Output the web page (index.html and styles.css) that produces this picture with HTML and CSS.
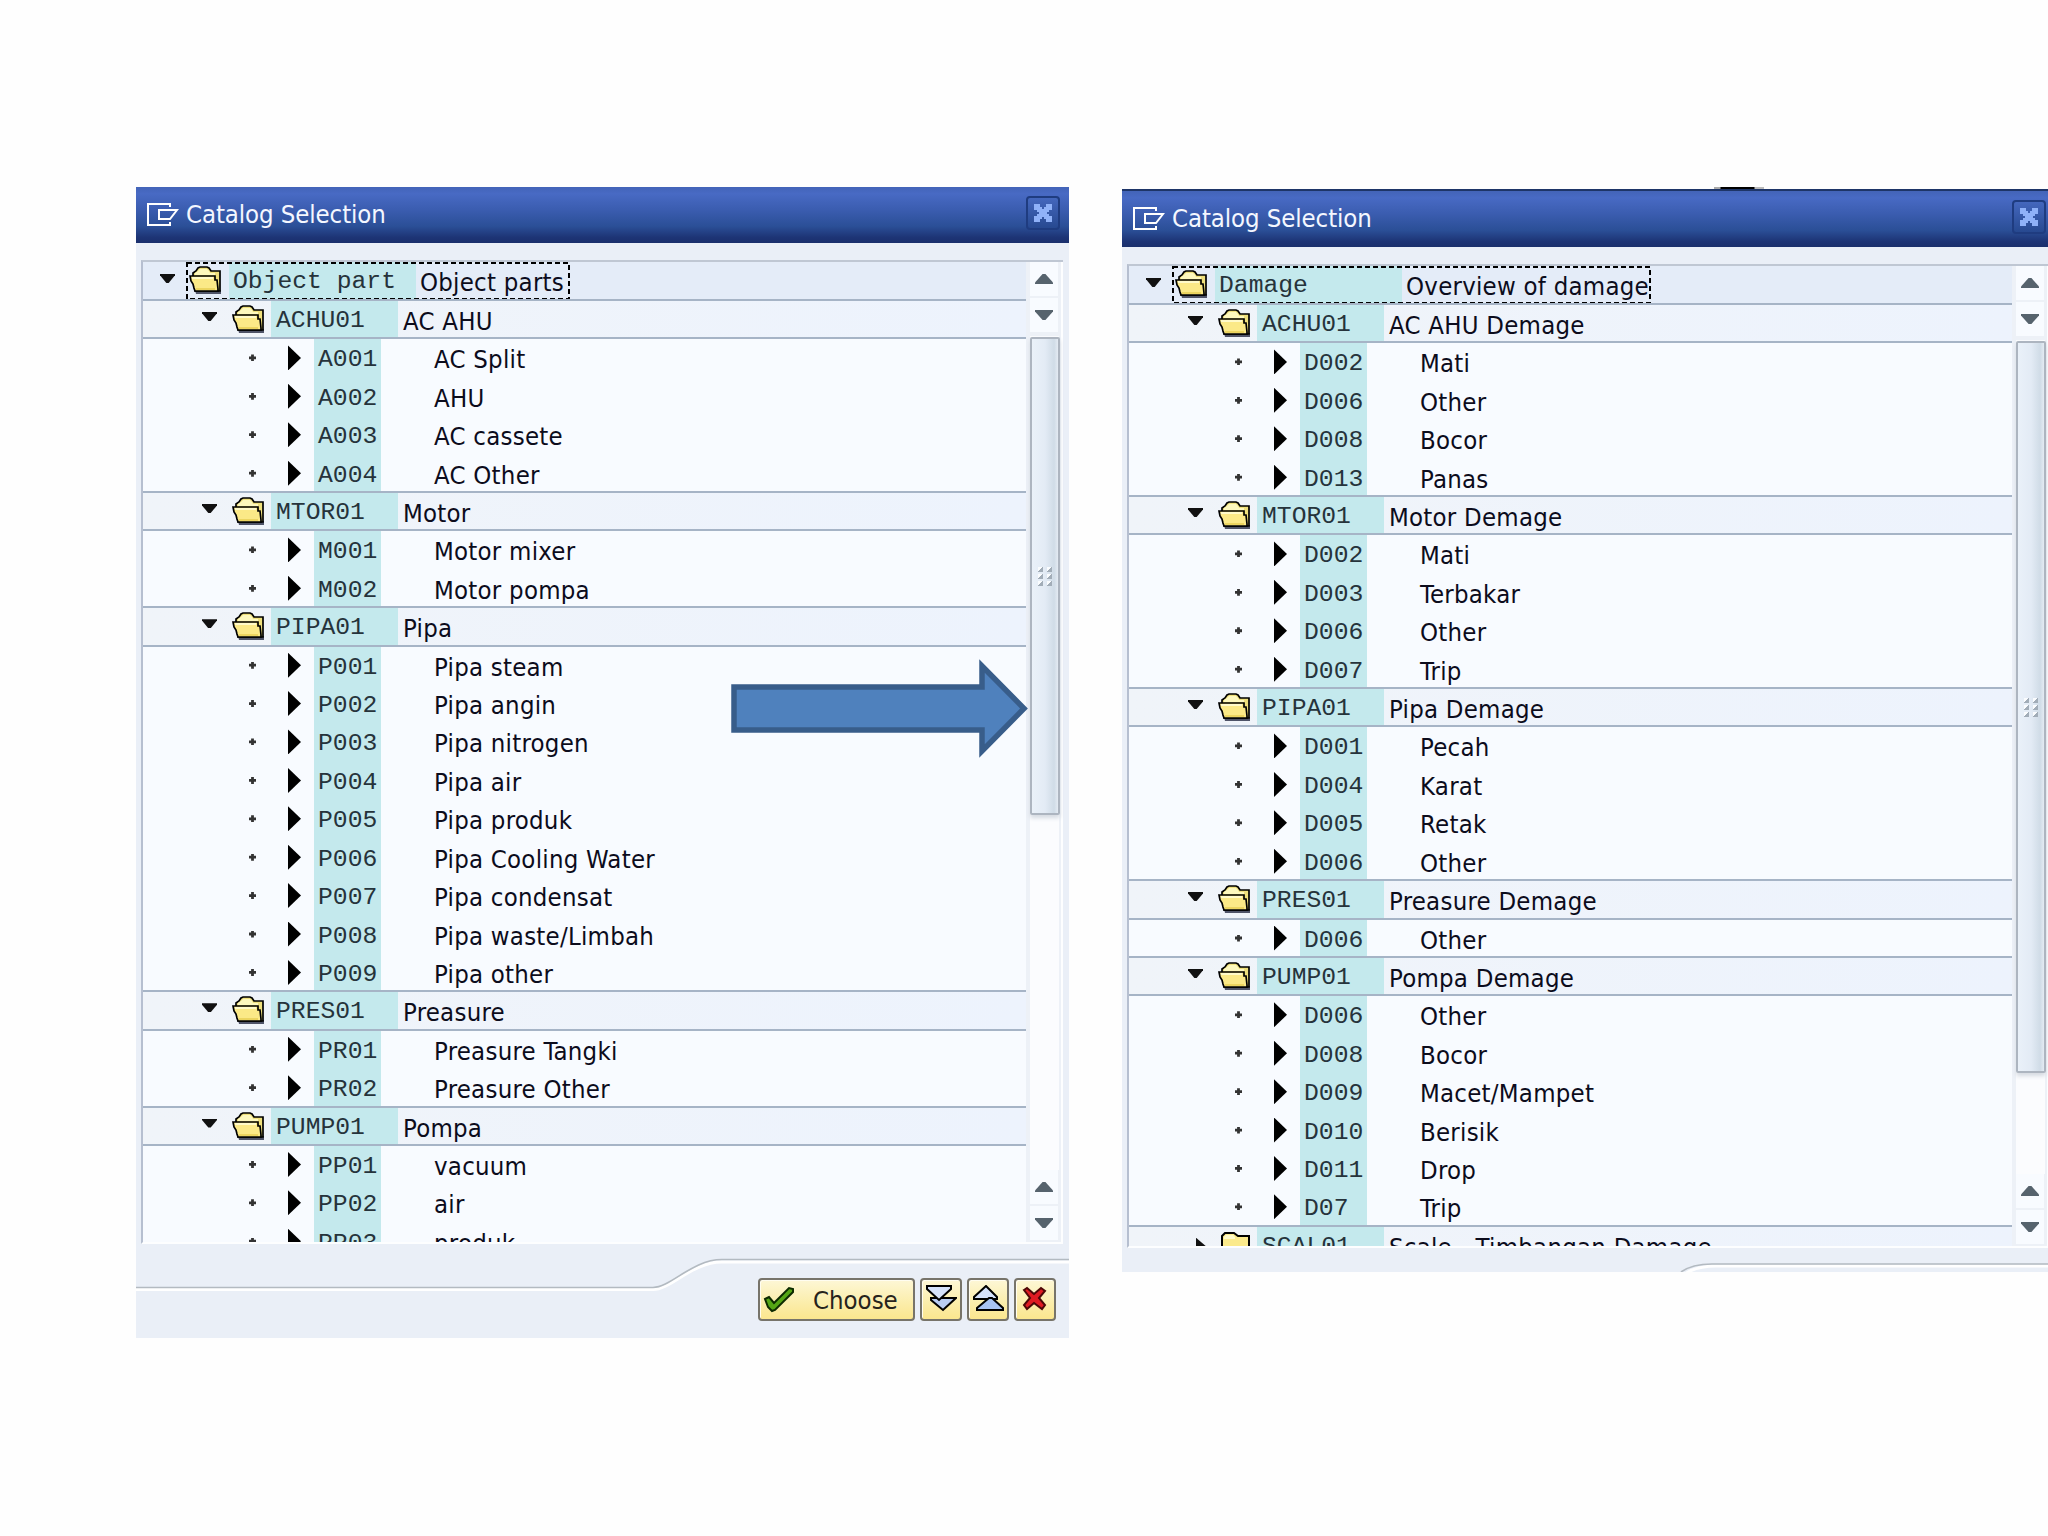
FILE: index.html
```html
<!DOCTYPE html>
<html lang="id">
<head>
    <meta charset="UTF-8">
    <title>Catalog Selection</title>
    <link rel="stylesheet" href="styles.css">
</head>
<body>
    <!-- shared icons -->
    <svg class="sprite" width="0" height="0">
        <symbol id="icon-window" viewBox="0 0 33 25">
            <path d="M24 5V2H2v21h22v-3M13 8h18l-7 9H13z" fill="none" stroke="#fff" stroke-width="2"/>
        </symbol>
        <symbol id="icon-close" viewBox="0 0 18 18">
            <path d="M0 0h6v3h2v2h2V3h2V0h6v6h-3v2h-2v2h2v2h3v6h-6v-3h-2v-2H8v2H6v3H0v-6h3v-2h2V8H3V6H0z" fill="#8fb1f8"/>
        </symbol>
        <symbol id="icon-open" viewBox="0 0 34 28">
            <path d="M6 24h26v4H7z" fill="#4f5468"/>
            <path d="M4 10V7l3-2 2-3 2-1h7l2 1 2 3h9v20H6z" fill="#efe07c" stroke="#000" stroke-width="1.700"/>
            <path d="M6 9V7l3-2 2-2h7l2 2 1 2h5v2z" fill="#fdf8bd"/>
            <path d="M1 10h25v4h2l1 9v2H6l-1-3-1-4-2-3z" fill="#fbe987" stroke="#000" stroke-width="1.700"/>
            <path d="M3 12h21" stroke="#fffac9" stroke-width="2"/>
            <path d="M7 23h19" stroke="#ecd560" stroke-width="2"/>
        </symbol>
        <symbol id="icon-closed" viewBox="0 0 34 28">
            <path d="M4 27V5l3-3h9l4 3h11v22z" fill="#fbea8c" stroke="#000" stroke-width="2"/>
            <path d="M6 8V6l2-2h7l2 2v2z" fill="#fffac9"/>
        </symbol>
    </svg>

    <div class="window window-parts">
        <div class="title-bar">
            <svg class="window-icon"><use href="#icon-window"/></svg>
            <h1>Catalog Selection</h1>
            <div class="close"><svg><use href="#icon-close"/></svg></div>
        </div>
        <div class="content">
            <div class="tree" id="tree-parts"></div>
            <div class="scrollbar">
                <div class="step"><i class="up"></i></div>
                <div class="step"><i class="down"></i></div>
                <div class="track"><div class="thumb"><i class="grip"></i></div></div>
                <div class="step"><i class="up"></i></div>
                <div class="step"><i class="down"></i></div>
            </div>
        </div>
        <div class="footer">
            <svg class="footer-line" width="933" height="94" viewBox="0 0 933 94">
                <path d="M0 45.500H517C535 45.500 556 18 586 18H933" fill="none" stroke="#fff" stroke-width="3"/>
                <path d="M0 43.500H517C535 43.500 556 15.500 586 15.500H933" fill="none" stroke="#b3bac1" stroke-width="1.700"/>
            </svg>
            <div class="buttons">
                <button class="btn btn-choose">
                    <svg width="32" height="28" viewBox="0 0 32 28">
                        <path d="M2 13l4-2 5 6L26 2l4 1v3L12 24l-3 1-4-4z" fill="#55a615" stroke="#0d2b00" stroke-width="2"/>
                    </svg>
                    <span>Choose</span>
                </button>
                <button class="btn">
                    <svg width="32" height="28" viewBox="0 0 32 28">
                        <path d="M6 13h25L18 25 6 15z" fill="#b9cdf4" stroke="#000" stroke-width="2"/>
                        <path d="M2 1h24v3L14 15 2 4z" fill="#d5e2fb" stroke="#000" stroke-width="2"/>
                    </svg>
                </button>
                <button class="btn">
                    <svg width="32" height="28" viewBox="0 0 32 28">
                        <path d="M2 14v-2L14 1l11 11v2z" fill="#d5e2fb" stroke="#000" stroke-width="2"/>
                        <path d="M5 25v-2l12-10h3l11 10v2z" fill="#a9c4f2" stroke="#000" stroke-width="2"/>
                    </svg>
                </button>
                <button class="btn">
                    <svg width="32" height="28" viewBox="0 0 32 28">
                        <path d="M5 5l3-2 7 6 7-6 4 3-6 7 6 7-3 4-8-6-7 6-3-4 6-7z" fill="#e01b22" stroke="#4d0808" stroke-width="2"/>
                    </svg>
                </button>
            </div>
        </div>
    </div>

    <div class="marks"></div>
    <div class="window window-damage">
        <div class="title-bar">
            <svg class="window-icon"><use href="#icon-window"/></svg>
            <h1>Catalog Selection</h1>
            <div class="close"><svg><use href="#icon-close"/></svg></div>
        </div>
        <div class="content">
            <div class="tree" id="tree-damage"></div>
            <div class="scrollbar">
                <div class="step"><i class="up"></i></div>
                <div class="step"><i class="down"></i></div>
                <div class="track"><div class="thumb"><i class="grip"></i></div></div>
                <div class="step"><i class="up"></i></div>
                <div class="step"><i class="down"></i></div>
            </div>
        </div>
        <div class="footer">
            <svg class="footer-line" width="933" height="24" viewBox="0 0 933 24">
                <path d="M563 26C570 21 580 18 594 18H933" fill="none" stroke="#fff" stroke-width="3"/>
                <path d="M559 24C566 19 576 16 590 16H933" fill="none" stroke="#b3bac1" stroke-width="1.700"/>
            </svg>
        </div>
    </div>

    <svg class="arrow" width="298" height="100" viewBox="0 0 298 100">
        <path d="M3 28H251V7L293 49.500L251 92V71H3z" fill="#4f81bd" stroke="#385d8a" stroke-width="5.500"/>
    </svg>

    <script src="tree.js"></script>
</body>
</html>
```

FILE: styles.css
```css
* {
    box-sizing: border-box;
    margin: 0;
    padding: 0;
}

body {
    position: relative;
    width: 2048px;
    height: 1536px;
    overflow: hidden;
    background: #fefefe;
    color: #0c0c1c;
    font-family: "DejaVu Sans Condensed", "DejaVu Sans", Tahoma, sans-serif;
    font-stretch: condensed;
    font-size: 25.5px;
}

.sprite {
    position: absolute;
}

/* windows */
.window {
    position: absolute;
    display: flex;
    flex-direction: column;
    width: 933px;
    background: #eaeff7;
}

.window-parts {
    left: 136px;
    top: 187px;
    height: 1151px;
}

.window-damage {
    left: 1122px;
    top: 189px;
    height: 1083px;
}

.title-bar {
    display: flex;
    align-items: center;
    height: 56px;
    flex-shrink: 0;
    padding: 0 9px 2px 10px;
    background: linear-gradient(#4364b8, #486ac4 12%, #3b5db0 40%, #2b4f97 70%, #1d3475 90%, #1a2f6c);
    color: #f4f7ff;
}

.window-damage .title-bar {
    height: 58px;
    padding-bottom: 2px;
    border-top: 2px solid #1e3568;
}

.window-icon {
    width: 33px;
    height: 25px;
}

.title-bar h1 {
    margin-left: 7px;
    font-size: 25.5px;
    font-weight: normal;
    letter-spacing: -0.08px;
    line-height: 36px;
    white-space: nowrap;
}

.close {
    display: flex;
    align-items: center;
    justify-content: center;
    width: 34px;
    height: 34px;
    margin-left: auto;
    margin-bottom: 2px;
    border: 2px solid #1f3c80;
    border-radius: 4px;
    background: linear-gradient(#4467bd, #274990);
}

.close svg {
    width: 18px;
    height: 18px;
}

.content {
    display: flex;
    height: 984px;
    margin: 17px 6px 0 5px;
    border-top: 2px solid #bfc7d3;
    border-left: 2px solid #b6bfd0;
    border-bottom: 2px solid #fdfeff;
    flex-shrink: 0;
}

/* tree */
.tree {
    width: 883px;
    overflow: hidden;
    background: #f8fbff;
}

.row {
    display: flex;
    height: 38.41px;
    white-space: nowrap;
}

.row.root {
    background: #e4ecf8;
    height: 39px;
}

.row.group {
    position: relative;
    background: linear-gradient(90deg, #f0f4f9, #edf3fd);
    border-bottom: 2px solid #a6b4c6;
    box-shadow: 0 -2px #a6b4c6;
}

.focus {
    display: flex;
    position: relative;
    height: 38px;
}

.focus-frame {
    position: absolute;
    inset: 0;
    width: 100%;
    height: 100%;
}

.expander {
    flex-shrink: 0;
    width: 15px;
    height: 9px;
    margin-top: 11px;
    background: #111;
    clip-path: polygon(0 0, 100% 0, 100% 15%, 58% 100%, 42% 100%, 0 15%);
}

.root .expander {
    margin: 12px 11px 0 17px;
}

.group .expander {
    margin-left: 59px;
    margin-right: 15px;
}

.group .expander.closed {
    width: 10px;
    height: 17px;
    margin-left: 67px;
    margin-right: 12px;
    clip-path: polygon(0 0, 100% 50%, 0 100%);
}

.folder {
    flex-shrink: 0;
    width: 34px;
    height: 28px;
    margin-top: 4px;
}

.root .folder {
    margin-left: 3px;
}

.code {
    flex-shrink: 0;
    background: #c4e9ed;
    color: #26333b;
    font-family: "Liberation Mono", "Courier New", monospace;
    font-size: 24.7px;
    line-height: 40px;
}

.root .code {
    width: 187px;
    margin-left: 6px;
    padding-left: 4px;
    line-height: 39px;
}

.group .code {
    width: 127px;
    margin-left: 5px;
    padding-left: 5px;
    line-height: 38px;
}

.leaf .code {
    width: 67px;
    margin-left: 13px;
    padding-left: 4px;
}

.label {
    margin-left: 53px;
    letter-spacing: 0.25px;
    line-height: 40px;
}

.root .label {
    margin-left: 4px;
    line-height: 40px;
}

.group .label {
    margin-left: 5px;
    line-height: 40px;
}

.bullet {
    width: 7px;
    height: 7px;
    margin: 15px 0 0 106px;
    background: #333;
    clip-path: polygon(30% 0, 70% 0, 70% 30%, 100% 30%, 100% 70%, 70% 70%, 70% 100%, 30% 100%, 30% 70%, 0 70%, 0 30%, 30% 30%);
}

.node {
    width: 13px;
    height: 25px;
    margin: 6px 0 0 32px;
    background: #000;
    clip-path: polygon(0 0, 100% 50%, 0 100%);
}

/* scrollbar */
.scrollbar {
    display: flex;
    flex-direction: column;
    width: 37px;
    padding: 0 2px 0 4px;
    border-right: 2px solid #fdfeff;
    background: #edf1f7;
}

.step {
    display: flex;
    align-items: center;
    justify-content: center;
    height: 34px;
    margin: 0 1px 2px 0;
    background: #f8fbff;
}

.step:nth-child(2) {
    margin-bottom: 4px;
}

.step i {
    width: 18px;
    height: 10px;
    background: #56636d;
}

.up {
    clip-path: polygon(42% 0, 58% 0, 100% 85%, 100% 100%, 0 100%, 0 85%);
}

.down {
    clip-path: polygon(0 0, 100% 0, 100% 15%, 58% 100%, 42% 100%, 0 15%);
}

.track {
    flex: 1;
    padding: 1px 0 0;
    background: #fbfcfe;
}

.thumb {
    display: flex;
    align-items: center;
    justify-content: center;
    width: 30px;
    height: 478px;
    border: 2px solid #adb5c0;
    border-radius: 2px;
    background: linear-gradient(90deg, #eaf1f9, #e3ebf5 50%, #d0dce7 85%, #e4ebf3);
    box-shadow: 0 3px 4px #d5dae1;
}

.window-damage .thumb {
    height: 732px;
}

.grip {
    width: 15px;
    height: 19px;
    background:
        linear-gradient(135deg, #fafcfe 45%, #a2adb8 50%) 0 0 / 5px 5px no-repeat,
        linear-gradient(135deg, #fafcfe 45%, #a2adb8 50%) 9px 0 / 5px 5px no-repeat,
        linear-gradient(135deg, #fafcfe 45%, #a2adb8 50%) 0 7px / 5px 5px no-repeat,
        linear-gradient(135deg, #fafcfe 45%, #a2adb8 50%) 9px 7px / 5px 5px no-repeat,
        linear-gradient(135deg, #fafcfe 45%, #a2adb8 50%) 0 14px / 5px 5px no-repeat,
        linear-gradient(135deg, #fafcfe 45%, #a2adb8 50%) 9px 14px / 5px 5px no-repeat;
}

/* footer */
.footer {
    position: relative;
    flex: 1;
    overflow: hidden;
}

.footer-line {
    position: absolute;
    left: 0;
    top: 0;
}

.buttons {
    position: relative;
    display: flex;
    gap: 5px;
    justify-content: flex-end;
    padding: 34px 13px 0 0;
}

.btn {
    display: flex;
    align-items: center;
    justify-content: center;
    width: 42px;
    height: 43px;
    padding-bottom: 2px;
    border: 2px solid #77746a;
    border-radius: 4px;
    background: linear-gradient(#fdf7d6, #fbedaa 60%, #fbe68e);
    box-shadow: inset 1px 1px #fffdf0;
    color: #26231c;
    font-family: inherit;
    font-size: 25.5px;
}

.btn-choose {
    width: 157px;
    justify-content: flex-start;
    padding: 0 0 0 3px;
}

.btn-choose span {
    margin-left: 18px;
}

.marks {
    position: absolute;
    left: 1714px;
    top: 187px;
    width: 50px;
    height: 2px;
    background: linear-gradient(90deg, #aaa 6px, #000 7px 40px, #bbb 41px);
}

.arrow {
    position: absolute;
    left: 731px;
    top: 659px;
}
```

FILE: tree.js
```js
// [code, description, children]
const parts = [
    ['ACHU01', 'AC AHU', [['A001', 'AC Split'], ['A002', 'AHU'], ['A003', 'AC cassete'], ['A004', 'AC Other']]],
    ['MTOR01', 'Motor', [['M001', 'Motor mixer'], ['M002', 'Motor pompa']]],
    ['PIPA01', 'Pipa', [
        ['P001', 'Pipa steam'], ['P002', 'Pipa angin'], ['P003', 'Pipa nitrogen'],
        ['P004', 'Pipa air'], ['P005', 'Pipa produk'], ['P006', 'Pipa Cooling Water'],
        ['P007', 'Pipa condensat'], ['P008', 'Pipa waste/Limbah'], ['P009', 'Pipa other']
    ]],
    ['PRES01', 'Preasure', [['PR01', 'Preasure Tangki'], ['PR02', 'Preasure Other']]],
    ['PUMP01', 'Pompa', [['PP01', 'vacuum'], ['PP02', 'air'], ['PP03', 'produk']]]
];

const damage = [
    ['ACHU01', 'AC AHU Demage', [['D002', 'Mati'], ['D006', 'Other'], ['D008', 'Bocor'], ['D013', 'Panas']]],
    ['MTOR01', 'Motor Demage', [['D002', 'Mati'], ['D003', 'Terbakar'], ['D006', 'Other'], ['D007', 'Trip']]],
    ['PIPA01', 'Pipa Demage', [['D001', 'Pecah'], ['D004', 'Karat'], ['D005', 'Retak'], ['D006', 'Other']]],
    ['PRES01', 'Preasure Demage', [['D006', 'Other']]],
    ['PUMP01', 'Pompa Demage', [
        ['D006', 'Other'], ['D008', 'Bocor'], ['D009', 'Macet/Mampet'],
        ['D010', 'Berisik'], ['D011', 'Drop'], ['D07', 'Trip']
    ]],
    ['SCAL01', 'Scale - Timbangan Damage', null]
];

function renderTree(id, code, label, width, groups) {
    let html = `
        <div class="row root">
            <i class="expander"></i>
            <div class="focus" style="width: ${width}px">
                <svg class="folder"><use href="#icon-open"/></svg>
                <span class="code">${code}</span>
                <span class="label">${label}</span>
                <svg class="focus-frame"><rect x="1" y="1" width="${width - 2}" height="36" fill="none" stroke="#000" stroke-width="2" stroke-dasharray="5 3"/></svg>
            </div>
        </div>`;

    groups.forEach(([groupCode, groupLabel, children]) => {
        html += `
            <div class="row group">
                <i class="expander ${children ? '' : 'closed'}"></i>
                <svg class="folder"><use href="#icon-${children ? 'open' : 'closed'}"/></svg>
                <span class="code">${groupCode}</span>
                <span class="label">${groupLabel}</span>
            </div>`;
        (children || []).forEach(([leafCode, leafLabel]) => {
            html += `
                <div class="row leaf">
                    <i class="bullet"></i>
                    <i class="node"></i>
                    <span class="code">${leafCode}</span>
                    <span class="label">${leafLabel}</span>
                </div>`;
        });
    });

    document.getElementById(id).innerHTML = html;
}

renderTree('tree-parts', 'Object part', 'Object parts', 384, parts);
renderTree('tree-damage', 'Damage', 'Overview of damage', 479, damage);
```
